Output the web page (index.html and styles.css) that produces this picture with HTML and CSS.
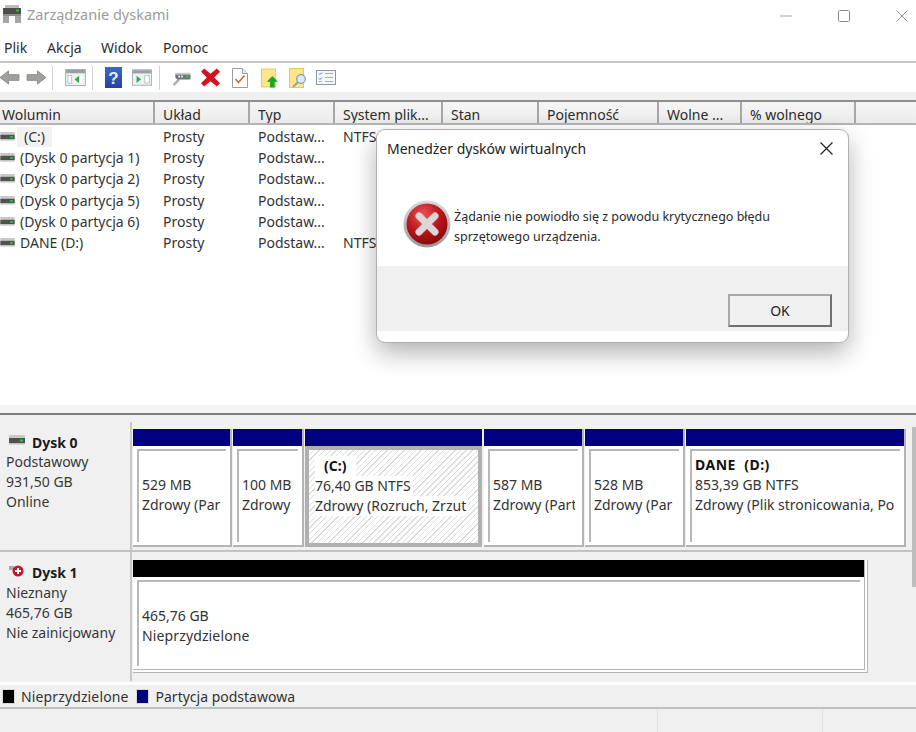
FILE: index.html
```html
<!DOCTYPE html>
<html lang="pl">
<head>
<meta charset="utf-8">
<title>Zarządzanie dyskami</title>
<link rel="stylesheet" href="styles.css">
</head>
<body>
<svg class="defs" width="0" height="0" aria-hidden="true">
  <defs>
    <symbol id="drive" viewBox="0 0 16 10">
      <rect x="0" y="0" width="16" height="3" fill="#c9c9c9"/>
      <rect x="0" y="3" width="16" height="5" fill="#4f534f"/>
      <rect x="11" y="4.5" width="3" height="2" fill="#35c24a"/>
      <rect x="0" y="8" width="16" height="1.5" fill="#bdbdbd"/>
    </symbol>
    <radialGradient id="errFill" cx="40%" cy="28%" r="80%">
      <stop offset="0" stop-color="#e9545a"/>
      <stop offset=".55" stop-color="#b81319"/>
      <stop offset="1" stop-color="#7f080c"/>
    </radialGradient>
    <linearGradient id="errRim" x1="0" y1="0" x2="0" y2="1">
      <stop offset="0" stop-color="#d9d9d9"/>
      <stop offset="1" stop-color="#9a9a9a"/>
    </linearGradient>
    <linearGradient id="helpFill" x1="0" y1="0" x2="0" y2="1">
      <stop offset="0" stop-color="#3c68c8"/>
      <stop offset="1" stop-color="#23439f"/>
    </linearGradient>
  </defs>
</svg>
<div class="app">
  <header class="titlebar">
    <svg class="app-icon" viewBox="0 0 20 20">
      <rect x="3" y="1" width="14" height="3" fill="#bcbcbc"/>
      <rect x="1" y="4" width="18" height="6" fill="#4a4f4c"/>
      <rect x="14" y="5.5" width="3" height="2" fill="#37b34a"/>
      <rect x="1" y="10" width="18" height="2" fill="#8d8d8d"/>
      <rect x="1" y="12" width="6" height="7" fill="#a5a5a5"/>
      <rect x="13" y="12" width="6" height="7" fill="#a5a5a5"/>
    </svg>
    <span class="title-text">Zarządzanie dyskami</span>
    <div class="win-buttons">
      <svg class="win-btn" viewBox="0 0 12 12"><path d="M0 6h12" stroke="#a5a5a5" fill="none"/></svg>
      <svg class="win-btn" viewBox="0 0 12 12"><rect x=".5" y=".5" width="11" height="11" rx="1.2" stroke="#8c8c8c" fill="none"/></svg>
      <svg class="win-btn" viewBox="0 0 12 12"><path d="M.5.5l11 11M11.500.5l-11 11" stroke="#8c8c8c" fill="none"/></svg>
    </div>
  </header>
  <nav class="menubar">
    <span>Plik</span><span>Akcja</span><span>Widok</span><span>Pomoc</span>
  </nav>
  <div class="toolbar">
    <svg class="tool arrow" viewBox="0 0 22 18"><path d="M1 9l9-7v4h11v6H10v4z" fill="#9fa19d" stroke="#8a8c88"/></svg>
    <svg class="tool arrow" viewBox="0 0 22 18"><path d="M21 9l-9-7v4H1v6h11v4z" fill="#9fa19d" stroke="#8a8c88"/></svg>
    <i class="tool-sep sep-a"></i>
    <svg class="tool panel pa" viewBox="0 0 22 18"><rect x=".5" y=".5" width="21" height="17" fill="#eef1f3" stroke="#a8acb0"/><rect x="1" y="1" width="20" height="3.500" fill="#9a9fa3"/><rect x="3" y="7" width="4" height="8" fill="#fff" stroke="#a9b4bd" stroke-width=".8"/><path d="M15 7v8l-5-4z" fill="#34a853"/><rect x="15" y="7" width="3" height="8" fill="#fff"/></svg>
    <i class="tool-sep sep-b"></i>
    <svg class="tool help" viewBox="0 0 17 21"><rect width="17" height="21" fill="url(#helpFill)"/><text class="help-q" x="8.500" y="16.500" text-anchor="middle">?</text></svg>
    <svg class="tool panel pb" viewBox="0 0 22 18"><rect x=".5" y=".5" width="21" height="17" fill="#eef1f3" stroke="#a8acb0"/><rect x="1" y="1" width="20" height="3.500" fill="#9a9fa3"/><path d="M5 7v8l5-4z" fill="#34a853"/><rect x="14" y="7" width="5" height="8" fill="#fff" stroke="#a9b4bd" stroke-width=".8"/></svg>
    <i class="tool-sep sep-c"></i>
    <svg class="tool connect" viewBox="0 0 20 18"><path d="M1 17l6-6" stroke="#a9b0b5" stroke-width="2.500"/><path d="M3 5h15l1 2v4H5L3 9z" fill="#6d7473"/><rect x="3" y="4" width="16" height="2" fill="#c8c8c8"/><rect x="6" y="7" width="2" height="2" fill="#dfe9ef"/><rect x="9" y="7" width="2" height="2" fill="#dfe9ef"/><rect x="14" y="7" width="3" height="2" fill="#35c24a"/></svg>
    <svg class="tool del" viewBox="0 0 18 18"><path d="M3 .5l6 5 6-5 3 3-5.500 5.500 5.500 5.500-3 3-6-5-6 5-3-3L5.500 9 0 3.500z" fill="#d3131f"/></svg>
    <svg class="tool check" viewBox="0 0 16 20"><path d="M.5.5h10l5 5v14H.5z" fill="#fff" stroke="#9d9d9d"/><path d="M10.500.5v5h5" fill="#eee" stroke="#9d9d9d"/><path d="M3.500 11l3 3.500 6-7" fill="none" stroke="#e0643f" stroke-width="1.600"/></svg>
    <svg class="tool folder f-a" viewBox="0 0 18 20"><rect x=".5" y=".5" width="15" height="19" fill="#fde48d" stroke="#e9c75f"/><path d="M12 8l6 6h-3.500v6h-5v-6H6z" fill="#1fa71f"/></svg>
    <svg class="tool folder f-b" viewBox="0 0 18 20"><rect x=".5" y=".5" width="14" height="19" fill="#fde48d" stroke="#e9c75f"/><path d="M4 19l5-5" stroke="#98a4ad" stroke-width="2.200"/><circle cx="12" cy="11" r="4.300" fill="#d8ecf7" stroke="#8d9aa4" stroke-width="1.200"/></svg>
    <svg class="tool props" viewBox="0 0 20 15"><rect x=".5" y=".5" width="19" height="14" fill="#f4f7f9" stroke="#8e979e"/><path d="M3 3.500l1 1 2-2M3 8.500l1 1 2-2" fill="none" stroke="#3c83d6"/><path d="M9 3.500h8M9 7.500h8M9 11.500h8M3 11.500h3" stroke="#a4adb4"/></svg>
  </div>
  <div class="gutter"></div>
  <section class="list">
    <div class="cols head">
      <span>Wolumin</span><span>Układ</span><span>Typ</span><span>System plik...</span><span>Stan</span><span>Pojemność</span><span>Wolne ...</span><span>% wolnego</span><span></span>
    </div>
    <div class="rows">
      <div class="cols row"><span class="vol"><svg class="drive"><use href="#drive"/></svg><b class="sel">(C:)</b></span><span>Prosty</span><span>Podstaw...</span><span>NTFS</span></div>
      <div class="cols row"><span class="vol"><svg class="drive"><use href="#drive"/></svg>(Dysk 0 partycja 1)</span><span>Prosty</span><span>Podstaw...</span><span></span></div>
      <div class="cols row"><span class="vol"><svg class="drive"><use href="#drive"/></svg>(Dysk 0 partycja 2)</span><span>Prosty</span><span>Podstaw...</span><span></span></div>
      <div class="cols row"><span class="vol"><svg class="drive"><use href="#drive"/></svg>(Dysk 0 partycja 5)</span><span>Prosty</span><span>Podstaw...</span><span></span></div>
      <div class="cols row"><span class="vol"><svg class="drive"><use href="#drive"/></svg>(Dysk 0 partycja 6)</span><span>Prosty</span><span>Podstaw...</span><span></span></div>
      <div class="cols row"><span class="vol"><svg class="drive"><use href="#drive"/></svg>DANE (D:)</span><span>Prosty</span><span>Podstaw...</span><span>NTFS</span></div>
    </div>
  </section>
  <div class="splitter"></div>
  <section class="disks">
    <i class="scroll-thumb"></i>
    <div class="disk d0">
      <div class="disk-info">
        <div class="disk-name"><svg class="drive"><use href="#drive"/></svg><b>Dysk 0</b></div>
        <div>Podstawowy</div>
        <div>931,50 GB</div>
        <div>Online</div>
      </div>
      <div class="parts">
        <div class="part w1"><i class="bar blue"></i><div class="body"><div>&nbsp;</div><div>529 MB</div><div class="clip">Zdrowy (Par</div></div></div>
        <div class="part w2"><i class="bar blue"></i><div class="body"><div>&nbsp;</div><div>100 MB</div><div class="clip">Zdrowy</div></div></div>
        <div class="part w3 active"><i class="bar blue"></i><div class="body hatch"><div class="c-name"><b>(C:)</b></div><div><span class="tag">76,40 GB NTFS</span></div><div class="clip"><span class="tag">Zdrowy (Rozruch, Zrzut</span></div></div></div>
        <div class="part w4"><i class="bar blue"></i><div class="body"><div>&nbsp;</div><div>587 MB</div><div class="clip">Zdrowy (Part</div></div></div>
        <div class="part w5"><i class="bar blue"></i><div class="body"><div>&nbsp;</div><div>528 MB</div><div class="clip">Zdrowy (Par</div></div></div>
        <div class="part w6"><i class="bar blue"></i><div class="body"><div><b class="wide-b">DANE&nbsp; (D:)</b></div><div>853,39 GB NTFS</div><div class="clip">Zdrowy (Plik stronicowania, Po</div></div></div>
      </div>
    </div>
    <div class="disk d1">
      <div class="disk-info">
        <div class="disk-name"><svg class="drive bad" viewBox="0 0 16 14"><rect x="0" y="2" width="5" height="4" fill="#a9a9a9"/><circle cx="9" cy="7" r="5.500" fill="#c3172a"/><path d="M9 4v6M6 7h6" stroke="#fff" stroke-width="2"/></svg><b>Dysk 1</b></div>
        <div>Nieznany</div>
        <div>465,76 GB</div>
        <div>Nie zainicjowany</div>
      </div>
      <div class="parts unalloc">
        <div class="part w7"><i class="bar black"></i><div class="body"><div>&nbsp;</div><div>465,76 GB</div><div class="wide">Nieprzydzielone</div></div></div>
      </div>
    </div>
  </section>
  <footer class="legend">
    <i class="swatch black"></i><span class="leg-a wide">Nieprzydzielone</span>
    <i class="swatch blue"></i><span class="leg-b">Partycja podstawowa</span>
  </footer>
  <div class="status"><i></i><i></i></div>

  <div class="dialog" role="dialog">
    <div class="dlg-top">
      <div class="dlg-head">
        <span>Menedżer dysków wirtualnych</span>
        <svg class="dlg-close" viewBox="0 0 12 12"><path d="M.5.500l11 11M11.500.500l-11 11" stroke="#222" stroke-width="1.100" fill="none"/></svg>
      </div>
      <div class="dlg-msg">
        <svg class="err" viewBox="0 0 48 48">
          <circle cx="24" cy="24" r="23.500" fill="url(#errRim)"/>
          <circle cx="24" cy="24" r="20.500" fill="url(#errFill)"/>
          <path d="M16 16l16 16M32 16L16 32" stroke="#dcd6d6" stroke-width="7" stroke-linecap="round"/>
        </svg>
        <p>Żądanie nie powiodło się z powodu krytycznego błędu<br>sprzętowego urządzenia.</p>
      </div>
    </div>
    <div class="dlg-foot"><button class="ok" type="button">OK</button></div>
  </div>
</div>
</body>
</html>
```
FILE: styles.css
```css
* { box-sizing: border-box; }
html, body { margin: 0; padding: 0; }
body { font-family: "Noto Sans", "Open Sans", sans-serif; font-size: 14px; color: #333; background: #fff; }
i { display: block; font-style: normal; }
.defs { position: absolute; }
.app { position: relative; width: 916px; height: 732px; overflow: hidden; display: flex; flex-direction: column; background: #fff; }

.titlebar { height: 34px; display: flex; align-items: center; padding-left: 2px; flex: none; }
.app-icon { width: 20px; height: 20px; margin-top: -6px; }
.title-text { margin-left: 5px; font-size: 14.500px; color: #9a9a9a; margin-top: -6px; }
.win-buttons { margin-left: auto; display: flex; gap: 46px; padding-right: 8px; margin-top: -3px; }
.win-btn { width: 12px; height: 12px; display: block; }

.menubar { height: 29px; flex: none; display: flex; padding: 4px 0 0 4px; border-bottom: 2px solid #c6c6c6; color: #2d2d2d; }
.menubar span:nth-child(1) { width: 43px; }
.menubar span:nth-child(2) { width: 54px; }
.menubar span:nth-child(3) { width: 62px; }

.toolbar { height: 29px; flex: none; display: flex; align-items: center; background: #fff; }
.tool { display: block; flex: none; }
.arrow { width: 21px; height: 17px; }
.arrow:first-child { margin-left: -1px; }
.arrow + .arrow { margin-left: 6px; }
.tool-sep { width: 1px; height: 24px; background: #d0d0d0; flex: none; }
.sep-a { margin-left: 5px; }
.panel { width: 21px; height: 17px; }
.pa { margin-left: 12px; }
.sep-b { margin-left: 6px; }
.help { width: 17px; height: 21px; margin-left: 12px; }
.help-q { font: bold 17px "Liberation Sans", sans-serif; fill: #e6ecfb; }
.pb { width: 20px; margin-left: 10px; }
.sep-c { margin-left: 7px; }
.connect { width: 20px; height: 17px; margin-left: 12px; }
.del { width: 19px; height: 19px; margin-left: 9px; }
.check { width: 16px; height: 20px; margin-left: 12px; }
.f-a { width: 17px; height: 20px; margin-left: 13px; }
.f-b { width: 18px; height: 20px; margin-left: 11px; }
.props { width: 20px; height: 15px; margin-left: 9px; }

.gutter { height: 8px; flex: none; background: #f0f0f0; }

.list { flex: none; height: 305px; background: #fff; }
.cols { display: grid; grid-template-columns: 155px 95px 85px 108px 96px 120px 83px 114px 60px; }
.head { height: 25px; border-top: 2px solid #8f8f8f; border-bottom: 2px solid #b5b5b5; background: linear-gradient(#f6f6f6, #ebebeb); }
.head span { padding: 1px 0 0 8px; line-height: 24px; border-right: 2px solid #a8a8a8; color: #2d2d2d; white-space: nowrap; overflow: hidden; }
.head span:first-child { padding-left: 2px; }
.head span:last-child { border-right: 0; }
.rows { padding-top: 1px; }
.row { height: 21.200px; line-height: 21px; }
.row span { padding-left: 8px; white-space: nowrap; }
.row .vol { padding-left: 0; display: flex; align-items: center; color: #333; }
.vol .drive { width: 15px; height: 9px; margin-left: 0; margin-right: 5px; flex: none; }
.sel { font-weight: normal; background: #f1f1f1; padding: 0 7px; margin-left: -3px; line-height: 20px; }

.splitter { height: 10px; flex: none; background: #f4f4f4; border-bottom: 2px solid #7e7e7e; }

.disks { position: relative; flex: none; height: 268px; background: #f0f0f0; padding-top: 7px; border-bottom: 1px solid #fff; }
.scroll-thumb { position: absolute; right: 0; top: 12px; width: 4px; height: 160px; background: #bdbdbd; }
.disk { display: flex; height: 130px; }
.d0 { height: 130px; border-bottom: 2px solid #c2c2c2; }
.d1 { height: 129px; }
.disk-info { width: 132px; flex: none; padding: 10px 0 0 6px; line-height: 20px; border-right: 2px solid #c8c8c8; color: #383838; white-space: nowrap; }
.d1 .disk-info { padding-top: 11px; }
.disk-name { display: flex; align-items: center; height: 20px; }
.d0 .disk-name { padding-top: 1px; }
.disk-name b { color: #1c1c1c; }
.disk-name .drive { width: 16px; height: 10px; margin: -5px 7px 0 3px; flex: none; }
.disk-name .drive.bad { width: 16px; height: 14px; margin: -5px 7px 0 3px; }
.parts { flex: 1; display: flex; gap: 1px; padding: 7px 0 0 1px; }
.unalloc { padding-top: 8px; }
.part { flex: none; display: flex; flex-direction: column; background: #fff; height: 118px; border-right: 2px solid #b4b4b4; border-bottom: 2px solid #b4b4b4; }
.w1 { width: 99px; }
.w2 { width: 71px; }
.w3 { width: 177px; margin-right: 1px; }
.w4 { width: 100px; }
.w5 { width: 100px; }
.w6 { width: 220px; }
.w7 { width: 735px; height: 113px; border-right: 4px double #b4b4b4; border-bottom: 4px double #b4b4b4; }
.bar { height: 17px; flex: none; }
.blue { background: #000080; }
.black { background: #000; }
.body { flex: 1; margin: 3px 4px 3px 4px; padding: 4px 0 0 3px; border-top: 2px solid #b8b8b8; border-left: 2px solid #b8b8b8; line-height: 20px; color: #333; overflow: hidden; white-space: nowrap; }
.body b { color: #111; }
.clip { overflow: hidden; margin-right: 3px; }
.wide { letter-spacing: .13px; }
.wide-b { letter-spacing: .5px; }
.active { border: 0; background: #b0b0b0; }
.active .body { margin: 4px; border: 0; padding: 6px 0 0 6px; }
.active .clip { margin-right: 0; }
.hatch { background: repeating-linear-gradient(135deg, #fff 0 3px, #dcdcdc 3px 4px); }
.tag { background: #fff; display: inline-block; padding-right: 2px; }
.c-name b { background: #fff; display: inline-block; padding: 0 10px 0 9px; margin-left: 0; }

.legend { height: 24px; flex: none; background: #f0f0f0; display: flex; align-items: center; padding-left: 2px; border-bottom: 2px solid #c0c0c0; color: #333; margin-top: 2px; }
.swatch { width: 13px; height: 15px; margin-right: 6px; flex: none; border: 1px solid #d8d8d8; }
.leg-a { margin-right: 7px; }
.leg-b { margin-left: 1px; }

.status { flex: 1; background: #f0f0f0; position: relative; display: flex; padding-left: 657px; gap: 164px; }
.status i { width: 1px; background: #e3e3e3; }

.dialog { position: absolute; left: 377px; top: 130px; width: 471px; height: 212px; border-radius: 8px; background: #fff; box-shadow: 0 0 0 1px #b0b0b0, 0 10px 26px rgba(0,0,0,.32); display: flex; flex-direction: column; overflow: hidden; padding-bottom: 11px; }
.dlg-top { height: 136px; flex: none; }
.dlg-head { display: flex; align-items: center; justify-content: space-between; padding: 6px 15px 0 10px; height: 30px; color: #222; }
.dlg-close { width: 13px; height: 13px; display: block; }
.dlg-msg { display: flex; padding: 40px 0 0 26px; }
.err { width: 48px; height: 48px; flex: none; display: block; }
.dlg-msg p { margin: 7px 0 0 3px; font-size: 12.500px; line-height: 20px; color: #2b2b2b; }
.dlg-foot { flex: 1; background: #f0f0f0; display: flex; justify-content: flex-end; padding: 28px 16px 0 0; }
.ok { width: 104px; height: 33px; font: 14px "Noto Sans", sans-serif; color: #222; background: #f0f0f0; border: 2px solid #707070; border-top-color: #a8a8a8; border-left-color: #a8a8a8; padding: 0; }
```
